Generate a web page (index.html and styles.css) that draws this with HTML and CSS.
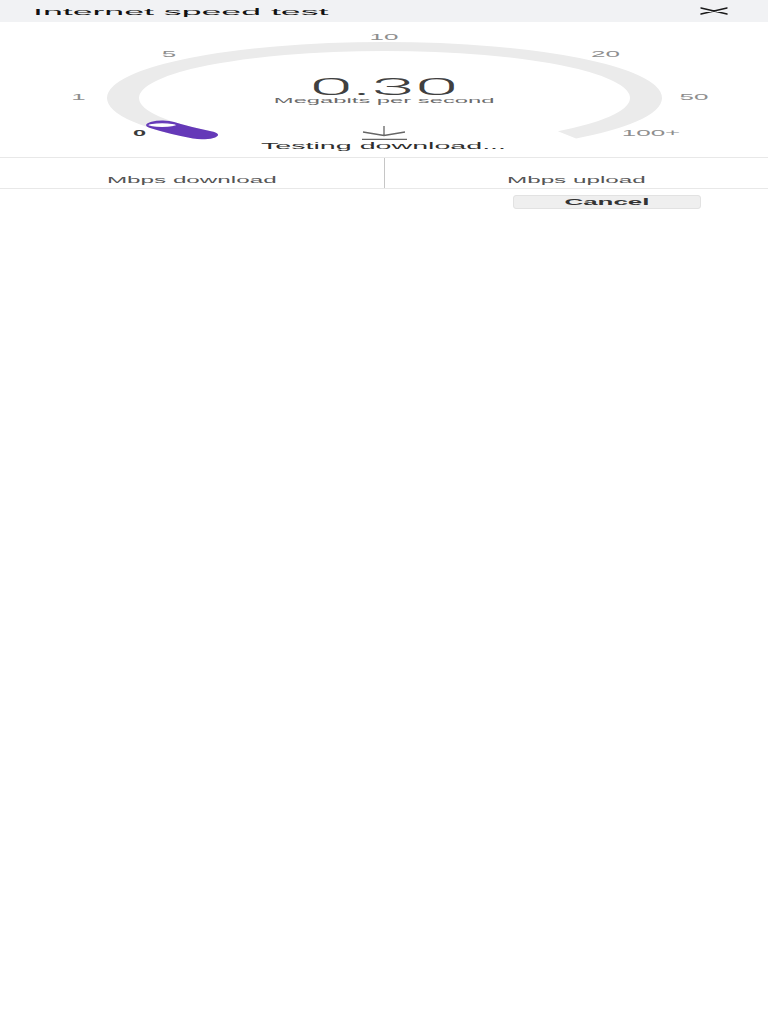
FILE: index.html
```html
<!DOCTYPE html>
<html lang="en">
<head>
<meta charset="utf-8">
<title>Internet speed test</title>
<link rel="stylesheet" href="styles.css">
</head>
<body>
<div class="app">
  <header class="topbar">
    <span class="title">Internet speed test</span>
    <svg class="close" width="28" height="10" viewBox="0 0 28 10" aria-label="Close">
      <path d="M1 2 L27 8 M1 8 L27 2" stroke="#1a1a1a" stroke-width="1.4" fill="none" stroke-linecap="round"/>
    </svg>
  </header>

  <section class="gauge">
    <svg class="dial" width="768" height="135" viewBox="0 22 768 135">
      <g transform="translate(384.5,98) scale(1,0.28)">
        <path d="M -182.5 131.7 A 261.5 184 0 1 1 182.5 131.7" stroke="#ebebeb" stroke-width="32" fill="none"/>
        <path d="M -182.5 131.7 A 261.5 184 0 0 1 -222.4 96.7" stroke="#6539b8" stroke-width="32" fill="none" stroke-linecap="round"/>
        <ellipse cx="-222.4" cy="96.7" rx="14.5" ry="9" fill="#ffffff" stroke="#6539b8" stroke-width="1.2" vector-effect="non-scaling-stroke"/>
      </g>
      <text class="tick zero" transform="translate(139.5,136) scale(2.8,1)" text-anchor="middle">0</text>
      <text class="tick" transform="translate(78.5,100) scale(3.1,1)" text-anchor="middle">1</text>
      <text class="tick" transform="translate(169,56.5) scale(3.1,1)" text-anchor="middle">5</text>
      <text class="tick" transform="translate(384,39.5) scale(3.1,1)" text-anchor="middle">10</text>
      <text class="tick" transform="translate(605.5,56.5) scale(3.1,1)" text-anchor="middle">20</text>
      <text class="tick" transform="translate(694,100) scale(3.1,1)" text-anchor="middle">50</text>
      <text class="tick" transform="translate(651,136) scale(3.1,1)" text-anchor="middle">100+</text>
    </svg>
    <div class="readout">
      <span class="speed">0.30</span>
      <span class="unit">Megabits per second</span>
      <svg class="dl-icon" width="50" height="15" viewBox="0 0 50 15">
        <path d="M25 1 L25 10.5 M4 7 L25 10.5 L46 7 M3 14.3 L48 14.3" stroke="#666" stroke-width="1.3" fill="none"/>
      </svg>
      <span class="status">Testing download...</span>
    </div>
  </section>

  <div class="stats">
    <div class="stat"><span class="stat-label">Mbps download</span></div>
    <div class="stat stat-right"><span class="stat-label">Mbps upload</span></div>
  </div>

  <div class="actions">
    <button class="cancel" type="button"><span class="cancel-text">Cancel</span></button>
  </div>
</div>
</body>
</html>
```

FILE: styles.css
```css
* { box-sizing: border-box; }

html, body {
  margin: 0;
  padding: 0;
  background: #ffffff;
}

body {
  font-family: "Liberation Sans", Arial, sans-serif;
  color: #222;
}

.app {
  width: 768px;
}

.topbar {
  height: 22px;
  background: #f1f2f4;
  display: flex;
  align-items: flex-start;
}

.title {
  display: inline-block;
  margin-left: 33px;
  margin-top: 7px;
  font-size: 9.8px;
  line-height: 9.8px;
  height: 9.8px;
  color: #111;
  transform: scaleX(3.64);
  transform-origin: left center;
  white-space: nowrap;
}

.close {
  display: block;
  margin-left: auto;
  margin-right: 40px;
  margin-top: 6px;
}

.gauge {
  position: relative;
  height: 135px;
}

.dial {
  position: absolute;
  left: 0;
  top: 0;
  display: block;
}

.tick {
  font-family: "Liberation Sans", Arial, sans-serif;
  font-size: 8.4px;
  fill: #8e8e8e;
}

.tick.zero {
  fill: #3a3a3a;
  font-weight: bold;
}

.readout {
  position: relative;
  display: flex;
  flex-direction: column;
  align-items: center;
  padding-top: 56px;
}

.speed {
  display: block;
  font-family: Roboto, "Liberation Sans", Arial, sans-serif;
  font-weight: 300;
  font-size: 23px;
  line-height: 19px;
  height: 19px;
  color: #404040;
  transform: scaleX(3.4);
  white-space: nowrap;
}

.unit {
  display: block;
  font-size: 8px;
  line-height: 8px;
  height: 8px;
  color: #6a6a6a;
  transform: scaleX(2.97);
  white-space: nowrap;
}

.dl-icon {
  display: block;
  margin-top: 20px;
}

.status {
  display: block;
  margin-top: 2px;
  font-size: 9px;
  line-height: 9px;
  height: 9px;
  color: #2e2e2e;
  transform: scaleX(3.18);
  white-space: nowrap;
}

.stats {
  display: flex;
  height: 32px;
  border-top: 1px solid #e8e8e8;
  border-bottom: 1px solid #e8e8e8;
}

.stat {
  flex: 1;
  display: flex;
  justify-content: center;
  padding-top: 18px;
}

.stat-right {
  border-left: 1px solid #c6c6c6;
}

.stat-label {
  display: block;
  font-size: 8.5px;
  line-height: 8.5px;
  height: 8.5px;
  color: #555;
  white-space: nowrap;
  transform: scaleX(2.85);
}

.actions {
  display: flex;
  padding-top: 6px;
  padding-left: 513px;
}

.cancel {
  width: 188px;
  height: 14px;
  padding: 0;
  margin: 0;
  border: 1px solid #e2e2e2;
  border-radius: 3px;
  background: #efefef;
  display: flex;
  align-items: center;
  justify-content: center;
  font-family: "Liberation Sans", Arial, sans-serif;
}

.cancel-text {
  display: block;
  font-size: 8.5px;
  line-height: 8.5px;
  height: 8.5px;
  font-weight: bold;
  color: #333;
  transform: scaleX(3.05);
  white-space: nowrap;
}
```
